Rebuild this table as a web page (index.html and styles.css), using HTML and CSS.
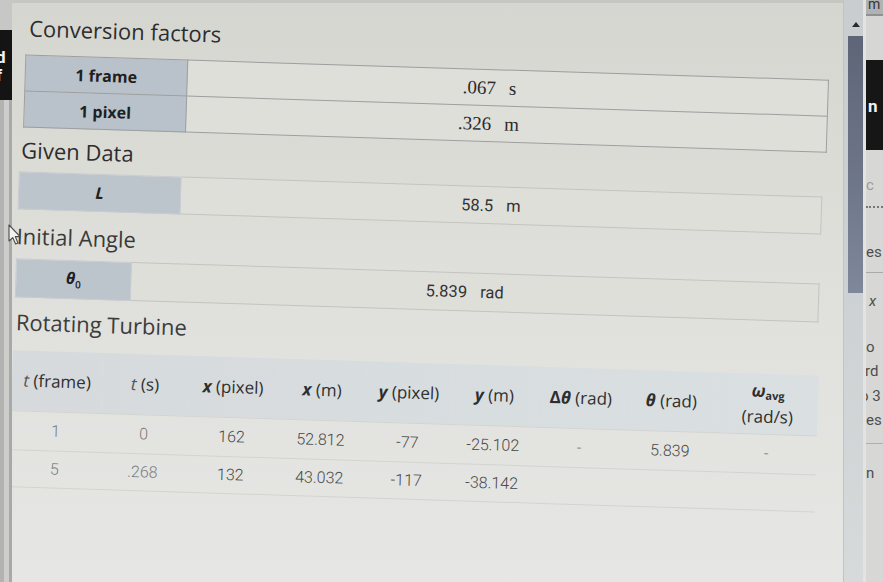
FILE: index.html
```html
<!DOCTYPE html>
<html lang="en">
<head>
<meta charset="utf-8">
<title>Rotating Turbine</title>
<link rel="stylesheet" href="styles.css">
</head>
<body>
<div class="screen">
  <div class="left-strip">
    <div class="ls-top"></div>
    <div class="ls-dark"><span>d</span><span>f</span></div>
    <div class="ls-rest"></div>
  </div>

  <div class="panel">
    <div class="content">
      <h2 class="heading heading-first">Conversion factors</h2>
      <table class="kv kv-conv">
        <tr><th class="kv-label">1 frame</th><td class="kv-value"><span class="num">.067</span><span class="unit">s</span></td></tr>
        <tr><th class="kv-label">1 pixel</th><td class="kv-value"><span class="num">.326</span><span class="unit">m</span></td></tr>
      </table>

      <h2 class="heading heading-given">Given Data</h2>
      <table class="kv kv-soft">
        <tr><th class="kv-label"><i class="var">L</i></th><td class="kv-value"><span class="num">58.5</span><span class="unit">m</span></td></tr>
      </table>

      <h2 class="heading heading-angle">Initial Angle</h2>
      <table class="kv kv-soft kv-narrow">
        <tr><th class="kv-label"><i class="var">θ</i><sub>0</sub></th><td class="kv-value"><span class="num">5.839</span><span class="unit">rad</span></td></tr>
      </table>

      <h2 class="heading heading-turbine">Rotating Turbine</h2>
      <table class="data">
        <colgroup>
          <col class="c1"><col class="c2"><col class="c3"><col class="c4"><col class="c5"><col class="c6"><col class="c7"><col class="c8"><col class="c9">
        </colgroup>
        <thead>
          <tr>
            <th><i class="tv">t</i> (frame)</th>
            <th><i class="tv">t</i> (s)</th>
            <th><i class="var">x</i> (pixel)</th>
            <th><i class="var">x</i> (m)</th>
            <th><i class="var">y</i> (pixel)</th>
            <th><i class="var">y</i> (m)</th>
            <th><b class="delta">Δ</b><i class="var">θ</i> (rad)</th>
            <th><i class="var">θ</i> (rad)</th>
            <th><i class="var">ω</i><sub>avg</sub><br>(rad/s)</th>
          </tr>
        </thead>
        <tbody>
          <tr class="row-first">
            <td class="faint">1</td><td class="faint">0</td><td>162</td><td>52.812</td><td>-77</td><td>-25.102</td><td class="faint">-</td><td>5.839</td><td class="faint">-</td>
          </tr>
          <tr class="row-second">
            <td class="faint">5</td><td class="faint">.268</td><td>132</td><td>43.032</td><td>-117</td><td>-38.142</td><td></td><td></td><td></td>
          </tr>
        </tbody>
      </table>
    </div>
  </div>

  <div class="scrollbar">
    <div class="sb-arrow"></div>
    <div class="sb-thumb"></div>
  </div>

  <div class="right-strip">
    <div class="rs-top">m</div>
    <div class="rs-light"></div>
    <div class="rs-dark">n</div>
    <div class="rs-rest">
      <span class="rs-c">c</span>
      <span class="rs-dots"></span>
      <span class="rs-es">es</span>
      <span class="rs-line"></span>
      <span class="rs-x">x</span>
      <span class="rs-o">o</span>
      <span class="rs-rd">rd</span>
      <span class="rs-p3">o 3</span>
      <span class="rs-es2">es</span>
      <span class="rs-line2"></span>
      <span class="rs-n">n</span>
    </div>
  </div>
</div>

<svg class="cursor" width="14" height="22" viewBox="0 0 14 22">
  <path d="M1 1 L1 17 L4.8 13.6 L7.6 20 L10 19 L7.3 12.6 L12.2 12.6 Z" fill="#f2f2f0" stroke="#4a4a4a" stroke-width="1.1" stroke-linejoin="round"/>
</svg>
</body>
</html>
```

FILE: styles.css
```css
* { box-sizing: border-box; }

html, body {
  margin: 0;
  padding: 0;
  background: #c4c4c1;
}

body {
  width: 883px;
  height: 582px;
  overflow: hidden;
  position: relative;
  font-family: Roboto, "Liberation Sans", Arial, sans-serif;
}

.screen {
  display: flex;
  width: 883px;
  height: 582px;
}

/* ---------- left strip (window behind) ---------- */
.left-strip {
  width: 12px;
  flex: none;
  display: flex;
  flex-direction: column;
  overflow: hidden;
}
.ls-top { height: 30px; flex: none; background: #c7c8c6; }
.ls-dark {
  height: 70px;
  flex: none;
  background: #141414;
  color: #f4f4f4;
  font: bold 17px Roboto, sans-serif;
  display: flex;
  flex-direction: column;
  padding-top: 18px;
  line-height: 18px;
}
.ls-dark span { margin-left: -4px; }
.ls-rest {
  flex: 1;
  background: linear-gradient(90deg, #b3b4b2 0 4px, #cdcecb 4px 9px, #a9aaa8 9px 12px);
}

/* ---------- main panel ---------- */
.panel {
  flex: 1;
  position: relative;
  overflow: hidden;
  background: linear-gradient(180deg, #d6d6d1 0%, #dcdcd7 30%, #e1e2de 60%, #e6e7e4 100%);
  border-top: 3px solid #c6c6c2;
}

.content {
  transform: rotate(1.8deg);
  transform-origin: 0 0;
  padding: 11px 0 0 12px;
  color: #2f2f2f;
}

.heading {
  font-family: "Open Sans", Roboto, "Liberation Sans", sans-serif;
  font-weight: 400;
  font-size: 22px;
  line-height: 26px;
  margin: 0;
  color: #2d2d2d;
}
.heading-first { margin: 0 0 14px 6px; }
.heading-given { margin: 9px 0 9px 2px; }
.heading-angle { margin: 13px 0 10px 0; color: #3a3a3a; }
.heading-turbine { margin: 11px 0 16px 2px; color: #3c3c3c; }

/* ---------- key / value tables ---------- */
.kv {
  border-collapse: collapse;
  width: 804px;
}
.kv-conv { margin-left: 3px; }
.kv .kv-label, .kv .kv-value { padding: 0; }

.kv-label {
  width: 162px;
  background: #b9c2ca;
  font-family: "Open Sans", Roboto, sans-serif;
  font-weight: 700;
  font-size: 16px;
  color: #202020;
  text-align: center;
}
.kv-narrow .kv-label { width: 115px; }

.kv .kv-value {
  background: #dfdfda;
  text-align: center;
  padding-right: 20px;
}
.num { display: inline-block; }
.unit { display: inline-block; margin-left: 13px; }

.kv-conv tr { height: 36px; }
.kv-conv th, .kv-conv td { border: 1px solid #9d9f9f; }
.kv-conv .kv-value {
  font-family: "Liberation Serif", "Times New Roman", serif;
  font-size: 19px;
  color: #2a2a2a;
}
.kv.kv-conv .kv-value { padding-right: 36px; }

.kv-soft tr { height: 37px; }
.kv-soft td { border: 1px solid #c3c4c1; border-left: none; }
.kv-soft th { border: 1px solid #c9ccd0; }
.kv-soft .kv-value {
  font-size: 16.5px;
  color: #333;
}
.kv-narrow tr { height: 38px; }
.kv-soft .kv-label { background: #bcc4cc; }

.var { font-style: italic; font-weight: 700; }
.kv-label sub { font-size: 10px; font-weight: 600; }

/* ---------- data table ---------- */
.data {
  border-collapse: collapse;
  width: 806px;
  table-layout: fixed;
  font-size: 16px;
}
.c1 { width: 90px; }
.c2 { width: 86px; }
.c3 { width: 90px; }
.c4 { width: 88px; }
.c5 { width: 86px; }
.c6 { width: 85px; }
.c7 { width: 88px; }
.c8 { width: 93px; }
.c9 { width: 100px; }

.data thead tr {
  height: 60px;
  background: linear-gradient(90deg, #d6dadd, #d8dde0 60%, #dadfe1);
}
.data th {
  font-family: "Open Sans", Roboto, sans-serif;
  font-weight: 500;
  font-size: 17px;
  color: #2e2e2e;
  text-align: center;
  padding: 0;
  line-height: 21px;
  white-space: nowrap;
}
.data th sub { font-size: 11px; font-weight: 700; vertical-align: -3px; }
.data .tv { font-style: italic; font-weight: 400; color: #555; }
.data .delta { font-weight: 700; }

.data tbody tr {
  border-top: 1px solid #d3d4d1;
}
.data .row-first { height: 39px; }
.data .row-second { height: 37px; }
.data tbody tr:last-child { border-bottom: 1px solid #d3d4d1; }
.data td {
  text-align: center;
  font-weight: 300;
  color: #474747;
  padding: 0;
}
.data td.faint { color: #7a7a7a; }

/* ---------- scrollbar ---------- */
.scrollbar {
  width: 23px;
  flex: none;
  position: relative;
  background: linear-gradient(180deg, #c9cdd0 0%, #cdd1d3 50%, #d7dadb 100%);
  border-left: 1px solid #c2c4c3;
  border-right: 3px solid #e3e4e2;
  padding: 22px 0 0 4px;
}
.sb-arrow {
  width: 0;
  height: 0;
  margin-left: 4px;
  border-left: 4px solid transparent;
  border-right: 4px solid transparent;
  border-bottom: 5px solid #2a2a2a;
}
.sb-thumb {
  margin-top: 9px;
  width: 15px;
  height: 257px;
  background: linear-gradient(180deg, #5e6577 0%, #6c7387 50%, #7f889b 100%);
}

/* ---------- right strip (window behind) ---------- */
.right-strip {
  width: 17px;
  flex: none;
  display: flex;
  flex-direction: column;
  overflow: hidden;
  font-family: Roboto, "Liberation Sans", sans-serif;
}
.rs-top {
  height: 16px;
  flex: none;
  background: #b1b3b3;
  color: #333;
  font-size: 14px;
  line-height: 8px;
  padding-left: 2px;
  border-bottom: 2px solid #8f9192;
}
.rs-light { height: 44px; flex: none; background: #d6d7d5; }
.rs-dark {
  height: 90px;
  flex: none;
  background: #161616;
  color: #f2f2f2;
  font-weight: 700;
  font-size: 17px;
  padding: 36px 0 0 2px;
}
.rs-rest {
  flex: 1;
  background: #d7d8d5;
  display: flex;
  flex-direction: column;
  color: #4d4d4d;
  font-size: 15px;
  line-height: 18px;
  padding-top: 26px;
}
.rs-rest span { display: block; white-space: nowrap; flex: none; }
.rs-c { color: #9a9a9a; height: 30px; }
.rs-dots { height: 0; border-top: 2px dotted #777; margin-bottom: 35px; }
.rs-es { height: 29px; }
.rs-line { height: 0; border-top: 1px solid #aaa; margin-bottom: 19px; }
.rs-x { font-style: italic; margin-left: 3px; height: 46px; }
.rs-o { height: 24px; }
.rs-rd { height: 25px; margin-left: -1px; }
.rs-p3 { height: 24px; margin-left: -6px; }
.rs-es2 { height: 32px; }
.rs-line2 { height: 0; border-top: 1px solid #b0b0b0; margin-bottom: 20px; }

/* ---------- mouse pointer over content ---------- */
.cursor {
  position: absolute;
  left: 8px;
  top: 224px;
}
```
